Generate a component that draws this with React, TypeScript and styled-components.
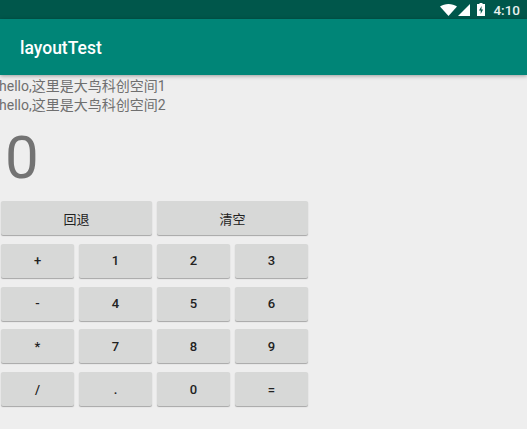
import React from "react";
import styled, { createGlobalStyle } from "styled-components";

const GlobalStyle = createGlobalStyle`
  html, body {
    margin: 0;
    padding: 0;
    background: #eeeeee;
  }
  body {
    font-family: Roboto, "Noto Sans CJK SC", sans-serif;
  }
`;

const rows = [
  ["+", "1", "2", "3"],
  ["-", "4", "5", "6"],
  ["*", "7", "8", "9"],
  ["/", ".", "0", "="],
];

export default function App() {
  return (
    <Screen>
      <GlobalStyle />
      <StatusBar>
        <svg width="17" height="12" viewBox="0 0 17 12">
          <path d="M0 2.6C2.4.9 5.3 0 8.5 0s6.1.9 8.5 2.6L8.5 12z" fill="#fff" />
        </svg>
        <svg width="12" height="12" viewBox="0 0 12 12">
          <path d="M0 12L12 0v12z" fill="#fff" />
        </svg>
        <BatteryIcon width="8" height="13" viewBox="0 0 8 13">
          <path
            d="M2.5 0h3v1H8v12H0V1h2.5zM4.6 3L2 7.6h1.7V11l2.4-4.6H4.4z"
            fill="#fff"
            fillRule="evenodd"
          />
        </BatteryIcon>
        <Clock>4:10</Clock>
      </StatusBar>
      <AppBar>layoutTest</AppBar>
      <Content>
        <Line>hello,这里是大鸟科创空间1</Line>
        <Line>hello,这里是大鸟科创空间2</Line>
        <Display>0</Display>
        <Keypad>
          <WideKey>回退</WideKey>
          <WideKey>清空</WideKey>
          {rows.flat().map((k) => (
            <Key key={k}>{k}</Key>
          ))}
        </Keypad>
      </Content>
    </Screen>
  );
}

const Screen = styled.div`
  width: 527px;
  height: 429px;
  overflow: hidden;
  background: #eeeeee;
`;

const StatusBar = styled.div`
  height: 19px;
  background: #00574b;
  display: flex;
  align-items: center;
  justify-content: flex-end;
  gap: 1px;
  padding-right: 7px;
`;

const BatteryIcon = styled.svg`
  margin-left: 6px;
`;

const Clock = styled.span`
  margin-left: 7px;
  color: #e6f0ee;
  font-size: 13.5px;
  font-weight: 500;
`;

const AppBar = styled.div`
  height: 56px;
  background: #008577;
  color: #fff;
  font-size: 17.5px;
  font-weight: 500;
  display: flex;
  align-items: center;
  padding: 2px 0 0 20px;
  box-sizing: border-box;
  box-shadow: 0 1px 4px rgba(0, 0, 0, 0.35);
`;

const Content = styled.div`
  padding-top: 2px;
`;

const Line = styled.div`
  height: 19px;
  line-height: 19px;
  margin-left: -1px;
  font-size: 14px;
  color: #6f6f6f;
`;

const Display = styled.div`
  height: 67px;
  line-height: 67px;
  margin: 9px 0 0 5px;
  font-size: 60px;
  color: #737373;
`;

const Keypad = styled.div`
  display: grid;
  grid-template-columns: repeat(4, 73px);
  grid-auto-rows: 34px;
  column-gap: 5px;
  row-gap: 8.75px;
  margin: 10px 0 0 1px;
`;

const Key = styled.button`
  padding: 0;
  border: none;
  border-radius: 2px;
  background: #d7d8d7;
  box-shadow: 0 1px 1px rgba(0, 0, 0, 0.3);
  color: #222;
  font-family: inherit;
  font-size: 13px;
  font-weight: 500;
`;

const WideKey = styled(Key)`
  grid-column: span 2;
  font-family: "Noto Sans CJK SC", sans-serif;
  font-weight: 400;
`;
